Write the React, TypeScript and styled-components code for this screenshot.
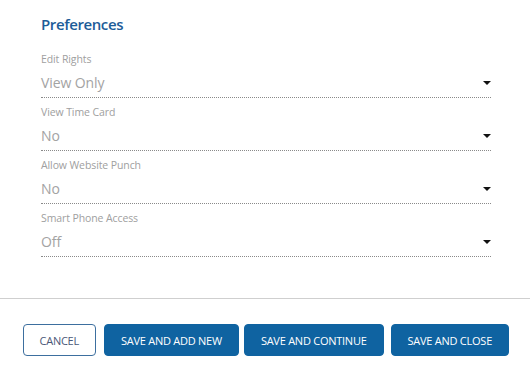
import React from 'react';
import styled, {createGlobalStyle} from 'styled-components';

const GlobalStyle = createGlobalStyle`
  html, body {
    margin: 0;
    padding: 0;
    background: #ffffff;
    font-family: "Open Sans", "Noto Sans", sans-serif;
  }
`;

const Page = styled.div`
  width: 530px;
  height: 374px;
  display: flex;
  flex-direction: column;
  background: #ffffff;
`;

const Body = styled.div`
  flex: 1;
  padding: 13px 39px 0 41px;
`;

const Title = styled.h2`
  margin: 0 0 16px 0;
  font-size: 15px;
  font-weight: 600;
  letter-spacing: -0.4px;
  line-height: 22px;
  color: #1d5c98;
`;

const Field = styled.div`
  display: flex;
  flex-direction: column;
  margin-bottom: 6px;
`;

const Label = styled.label`
  font-size: 10.5px;
  line-height: 16px;
  color: #a0a0a0;
  letter-spacing: -0.1px;
`;

const SelectRow = styled.div`
  display: flex;
  align-items: center;
  justify-content: space-between;
  height: 30px;
  border-bottom: 1px dotted #8a8a8a;
`;

const Value = styled.span`
  font-size: 14px;
  color: #a3a3a3;
  letter-spacing: -0.1px;
`;

const Caret = styled.span`
  width: 0;
  height: 0;
  margin-top: 1px;
  border-left: 4px solid transparent;
  border-right: 4px solid transparent;
  border-top: 4px solid #111;
`;

const Footer = styled.div`
  border-top: 1px solid #cfcfcf;
  display: flex;
  justify-content: flex-end;
  gap: 7px;
  padding: 25px 21px 18px 21px;
`;

const Button = styled.button<{primary?: boolean}>`
  flex-shrink: 0;
  white-space: nowrap;
  height: 32px;
  padding: 0 16px;
  border-radius: 4px;
  font-family: "Open Sans", "Noto Sans", sans-serif;
  font-size: 11px;
  letter-spacing: -0.25px;
  cursor: pointer;
  border: 1px solid ${({primary}) => (primary ? '#0f63a1' : '#3d6f9f')};
  background: ${({primary}) => (primary ? '#0f63a1' : '#ffffff')};
  color: ${({primary}) => (primary ? '#ffffff' : '#4a5877')};
`;

const CancelButton = styled(Button)`
  margin-right: 1px;
`;

const MiddleButton = styled(Button)`
  margin-right: -2px;
`;

const fields = [
  {label: 'Edit Rights', value: 'View Only'},
  {label: 'View Time Card', value: 'No'},
  {label: 'Allow Website Punch', value: 'No'},
  {label: 'Smart Phone Access', value: 'Off'},
];

export default function App() {
  return (
    <Page>
      <GlobalStyle />
      <Body>
        <Title>Preferences</Title>
        {fields.map((f) => (
          <Field key={f.label}>
            <Label>{f.label}</Label>
            <SelectRow>
              <Value>{f.value}</Value>
              <Caret />
            </SelectRow>
          </Field>
        ))}
      </Body>
      <Footer>
        <CancelButton>CANCEL</CancelButton>
        <MiddleButton primary>SAVE AND ADD NEW</MiddleButton>
        <Button primary>SAVE AND CONTINUE</Button>
        <Button primary>SAVE AND CLOSE</Button>
      </Footer>
    </Page>
  );
}
